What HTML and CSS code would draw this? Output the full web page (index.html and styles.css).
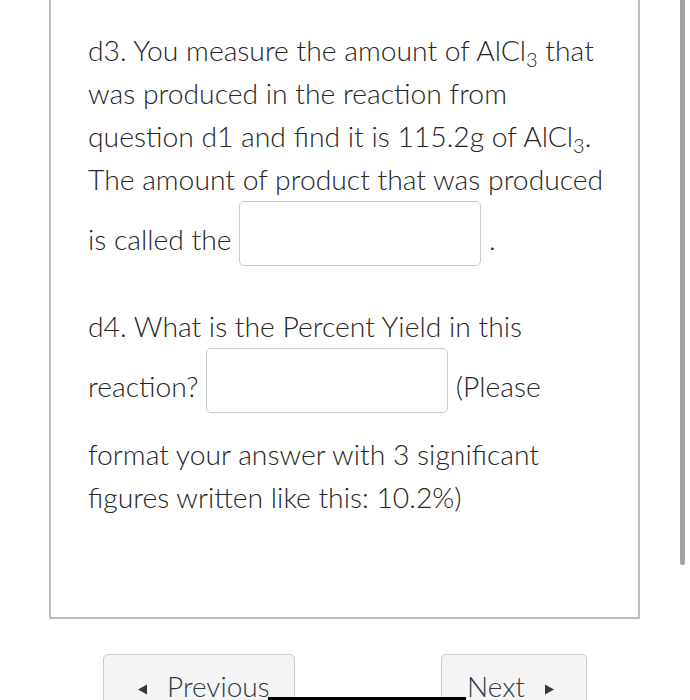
FILE: index.html
```html
<!DOCTYPE html>
<html>
<head>
<meta charset="utf-8">
<link rel="stylesheet" href="styles.css">
</head>
<body>
<div class="page">
  <div class="card">
    <p class="q">d3. You measure the amount of AlCl<sub>3</sub> that was produced in the reaction from question d1 and find it is 115.2g of AlCl<sub>3</sub>. The amount of product that was produced is called the <span class="blank"></span> .</p>
    <p class="q q2">d4. What is the Percent Yield in this reaction? <span class="blank"></span> (Please format your answer with 3 significant figures written like this: 10.2%)</p>
  </div>
  <div class="nav">
    <button class="btn btn-prev"><svg class="arrow" width="11" height="11" viewBox="0 0 11 11"><path d="M10 0.5 L10 10.5 L1 5.5 Z" fill="#2d3b45"/></svg><span>Previous</span></button>
    <button class="btn btn-next"><span>Next</span><svg class="arrow" width="11" height="11" viewBox="0 0 11 11"><path d="M1 0.5 L1 10.5 L10 5.5 Z" fill="#2d3b45"/></svg></button>
  </div>
</div>
<div class="bar"></div>
<div class="scroll-thumb"></div>
</body>
</html>
```
FILE: styles.css
```css
html, body {
  margin: 0;
  padding: 0;
  height: 700px;
  overflow: hidden;
  background: #ffffff;
}
body {
  font-family: Lato, "Open Sans", sans-serif;
  font-weight: 300;
  color: #262626;
  position: relative;
}
.page {
  width: 591px;
  margin-left: 49px;
}
.card {
  border: 2px solid #bdbdbd;
  border-top: 0;
  padding: 29px 31px 98px 37px;
}
.q {
  margin: 0;
  font-size: 28.3px;
  line-height: 43px;
}
.q2 {
  margin-top: 19px;
}
sub {
  font-size: 20px;
  line-height: 0;
  vertical-align: -6px;
}
.blank {
  display: inline-block;
  box-sizing: border-box;
  width: 242px;
  height: 65px;
  border: 1px solid #c9cdd0;
  border-radius: 5px;
  background: #fff;
  vertical-align: -36px;
  margin: 0 0 20px 0;
}
.nav {
  display: flex;
  justify-content: space-between;
  padding: 0 53px 0 54px;
  margin-top: 35px;
}
.btn {
  display: flex;
  align-items: flex-start;
  justify-content: flex-start;
  gap: 19px;
  height: 70px;
  box-sizing: border-box;
  border: 1px solid #c7cdd1;
  border-radius: 5px;
  background: #f5f5f5;
  font-family: Lato, sans-serif;
  font-weight: 300;
  font-size: 28px;
  line-height: normal;
  color: #2d3b45;
  padding: 14px 0 0 0;
}
.btn-prev { width: 192px; padding-left: 33px; }
.btn-next { width: 146px; padding-left: 25px; }
.arrow {
  margin-top: 15px;
  flex: none;
}
.bar {
  position: absolute;
  left: 268px;
  top: 697px;
  width: 198px;
  height: 3px;
  background: #000;
}
.scroll-thumb {
  position: absolute;
  left: 680px;
  top: 0;
  width: 5px;
  height: 565px;
  background: #a3a3a3;
  border-radius: 0 0 3px 3px;
}
```
